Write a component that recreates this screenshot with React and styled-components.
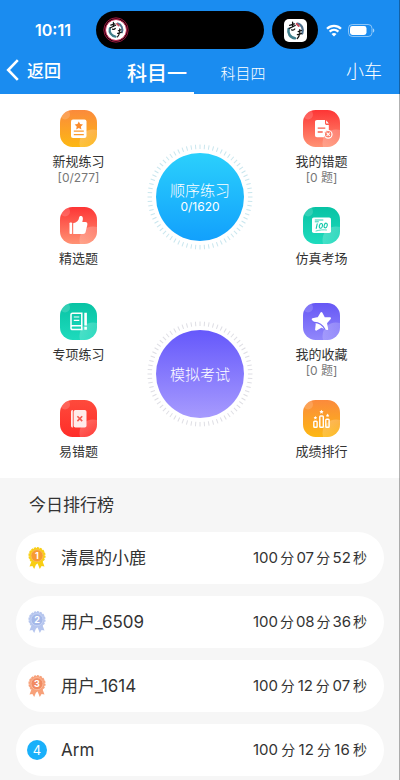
import styled, { createGlobalStyle } from "styled-components";

const GlobalStyle = createGlobalStyle`
  * {
    box-sizing: border-box;
  }

  body {
    margin: 0;
    background: #f6f6f6;
    color: #333;
    font-family: Inter, "Noto Sans CJK SC", sans-serif;
  }

  button {
    border: none;
    padding: 0;
    background: none;
    color: inherit;
    font-family: inherit;
    cursor: pointer;
  }
`;

const Page = styled.div`
  position: relative;
  min-height: 100vh;

  /* thin line along the right edge of the screen */
  &::after {
    content: "";
    position: absolute;
    top: 0;
    right: 0;
    bottom: 0;
    width: 1px;
    background: rgba(0, 0, 0, 0.3);
    pointer-events: none;
  }
`;

const Header = styled.header`
  background: #1a8cf0;
  color: white;
`;

const StatusBar = styled.div`
  display: flex;
  align-items: center;
  gap: 8px;
  padding-top: 11px;
`;

const Time = styled.time`
  flex: 1;
  padding-left: 35px;
  font-size: 16px;
  font-weight: 600;
  line-height: 20px;
`;

const Island = styled.div`
  display: flex;
  align-items: center;
  justify-content: ${(props) => (props.$small ? "center" : "flex-start")};
  width: ${(props) => (props.$small ? "46px" : "168px")};
  height: 38px;
  padding: ${(props) => (props.$small ? "0" : "0 7px")};
  border-radius: 19px;
  background: black;
`;

const Signals = styled.div`
  display: flex;
  align-items: center;
  gap: 6px;
  width: 74px;
`;

const Nav = styled.nav`
  display: grid;
  grid-template-columns: 1fr auto 1fr;
  height: 45px;
`;

const BackButton = styled.button`
  display: flex;
  align-items: center;
  justify-self: start;
  gap: 8px;
  padding: 0 0 4px 6px;
  font-size: 17px;
  font-weight: 500;
`;

const Tabs = styled.div`
  display: flex;
  gap: 12px;
`;

const Tab = styled.button`
  width: 74px;
  padding-top: 4px;
  border-bottom: 2px solid ${(props) => (props.$active ? "white" : "transparent")};
  font-size: ${(props) => (props.$active ? "20px" : "15px")};
  font-weight: ${(props) => (props.$active ? "500" : "300")};
`;

const VehicleButton = styled.button`
  justify-self: end;
  padding: 0 18px 4px 0;
  font-size: 18px;
  font-weight: 300;
`;

const Practice = styled.main`
  display: grid;
  grid-template-columns: 1fr 106px 1fr;
  height: 384px;
  padding: 16px 10px 0;
  background: white;
`;

const Column = styled.div`
  display: grid;
  grid-template-rows: 97px 96px 97px 78px;
  justify-items: center;
`;

const CenterColumn = styled.div`
  display: flex;
  flex-direction: column;
  gap: 71px;
  padding-top: 34px;
`;

const Feature = styled.button`
  display: flex;
  flex-direction: column;
  align-items: center;
`;

const Label = styled.span`
  margin-top: 5px;
  color: #333;
  font-size: 13px;
  line-height: 18px;
`;

const Count = styled.span`
  color: #777;
  font-size: 12px;
  line-height: 16px;
`;

const Ring = styled.button`
  display: grid;
  place-items: center;
  height: 106px;

  > * {
    grid-area: 1 / 1;
  }
`;

const Disc = styled.span`
  display: flex;
  flex-direction: column;
  align-items: center;
  justify-content: center;
  width: 88px;
  height: 88px;
  padding-top: 2px;
  border-radius: 50%;
  background: linear-gradient(${(props) => props.$from}, ${(props) => props.$to});
  color: white;
  font-size: 15px;
  font-weight: 300;
  line-height: 18px;
`;

const Progress = styled.span`
  font-size: 12px;
  font-weight: 400;
  line-height: 14px;
`;

const Ranking = styled.section`
  padding: 14px 16px 4px;
`;

const RankingTitle = styled.h2`
  margin: 0 0 14px 13px;
  font-size: 17px;
  font-weight: 400;
  line-height: 26px;
`;

const RankingList = styled.ol`
  display: flex;
  flex-direction: column;
  gap: 12px;
  margin: 0;
  padding: 0;
  list-style: none;
`;

const RankingRow = styled.li`
  display: flex;
  align-items: center;
  height: 52px;
  padding: 0 17px 0 11px;
  border-radius: 26px;
  background: white;
`;

const Place = styled.span`
  display: flex;
  justify-content: center;
  width: 20px;
`;

const PlaceNumber = styled.span`
  width: 20px;
  border-radius: 50%;
  background: #1ab0fa;
  color: white;
  font-size: 13px;
  line-height: 20px;
  text-align: center;
`;

const Name = styled.span`
  flex: 1;
  margin-left: 14px;
  font-size: 17px;
  line-height: 24px;
`;

const Score = styled.span`
  display: flex;
  align-items: baseline;
  justify-content: space-between;
  min-width: 114px;
  font-size: 14px;
  line-height: 20px;
`;

const Digits = styled.span`
  font-size: 15px;
`;

const tileColors = {
  orange: ["#fb8a3c", "#fdb813"],
  red: ["#fd3535", "#ff9274"],
  scarlet: ["#fe4a3c", "#ff2d28"],
  green: ["#08c3a4", "#1edbbd"],
  purple: ["#6657f5", "#9187fb"],
};

const Tile = ({ name, color, children }) => {
  const [from, to] = tileColors[color];
  return (
    <svg width="37" height="37" viewBox="0 0 37 37" aria-hidden="true">
      <defs>
        <linearGradient id={`tile-${name}`} x1="0" y1="0" x2="0" y2="1">
          <stop offset="0" stopColor={from} />
          <stop offset="1" stopColor={to} />
        </linearGradient>
        <linearGradient id={`shine-${name}`} x1="0" y1="0" x2="1" y2="1">
          <stop offset="0" stopColor="#fff" stopOpacity="0.28" />
          <stop offset="0.7" stopColor="#fff" stopOpacity="0.04" />
        </linearGradient>
        <clipPath id={`clip-${name}`}>
          <rect width="37" height="37" rx="12.5" />
        </clipPath>
      </defs>
      <g clipPath={`url(#clip-${name})`}>
        <rect width="37" height="37" fill={`url(#tile-${name})`} />
        <circle cx="5" cy="4.5" r="5" fill="#fff" opacity="0.16" />
        <circle cx="33" cy="33" r="13.5" fill={`url(#shine-${name})`} />
      </g>
      {children}
    </svg>
  );
};

const glyphs = {
  rules: (
    <>
      <rect x="11" y="9.5" width="15.5" height="18.5" rx="2" fill="#fff" />
      <path d="M18.8 11.4l1.3 2.6 2.9.4-2.1 2.1.5 2.9-2.6-1.4-2.6 1.4.5-2.9-2.1-2.1 2.9-.4z" fill="#fb8b2c" />
      <path d="M13.8 21.2h10M13.8 24.7h10" stroke="#fb9a2c" strokeWidth="1.2" />
    </>
  ),
  thumb: (
    <g fill="#fff">
      <rect x="9.5" y="15.5" width="2.6" height="11.5" rx="0.8" />
      <path d="M13.2 16.2c3.6-.6 5.5-2.6 5.8-5.2.2-1.9 1.4-2.3 2.5-1.9 1.6.6 1.8 2.7.8 6h3c1.7 0 2.4 1.2 2 2.8l-1.7 7.2c-.4 1.4-1.1 1.9-2.5 1.9h-9.9z" />
    </g>
  ),
  special: (
    <g fill="none" stroke="#fff">
      <path d="M12.6 10.2h9.2v12.6H11.6M11 24.4V11.6c0-.9.5-1.4 1.6-1.4M21.8 22.8v3.7h-9.2c-2.2 0-2.2-3.7 0-3.7" strokeWidth="1.5" />
      <path d="M13.8 14h5.5M13.8 17.4h5.5" strokeWidth="1.2" />
      <path d="M25.6 9.8v12.8M25.6 23.8v3" strokeWidth="2.6" />
    </g>
  ),
  mistakes: (
    <>
      <path d="M11 12c0-1.4.6-2 1.8-2v17.5c-1.2 0-1.8-.6-1.8-1.8z" fill="#fff" opacity="0.9" />
      <rect x="13.6" y="10" width="12.9" height="17.5" rx="1.8" fill="#ffeceb" />
      <path d="M17.4 16.3l4.8 4.8M22.2 16.3l-4.8 4.8" stroke="#f45b50" strokeWidth="1.6" />
    </>
  ),
  wrong: (
    <>
      <path d="M14 10h8v3.2c0 1.1.7 1.8 1.8 1.8h2v5c-3.4 0-5.4 2.5-4.7 7.2H14c-1.3 0-2-.8-2-2V12c0-1.3.7-2 2-2z" fill="#fff" />
      <path d="M23.1 10.2l2.7 3.3h-2.7z" fill="#fff" />
      <path d="M14.7 18.2h7.6M14.7 22h5" stroke="#f8604e" strokeWidth="1.3" />
      <circle cx="25.2" cy="24.3" r="3.8" fill="#fb7b66" stroke="#fff" strokeWidth="1.2" />
      <path d="M23.6 22.7l3.2 3.2M26.8 22.7l-3.2 3.2" stroke="#fff" strokeWidth="1.1" />
    </>
  ),
  exam: (
    <>
      <rect x="9" y="10.5" width="19" height="15.5" rx="1.8" fill="#fff" />
      <path d="M11.8 13h8.5M11.8 14.8h4" stroke="#15cbae" strokeWidth="0.9" />
      <g fill="none" stroke="#15c8ab" strokeWidth="1.1" strokeLinecap="round">
        <path d="M14.2 16.8l-1 4.6" />
        <ellipse cx="17.9" cy="18.9" rx="1.5" ry="2.4" transform="rotate(16 17.9 18.9)" />
        <ellipse cx="22.7" cy="18.5" rx="1.5" ry="2.4" transform="rotate(16 22.7 18.5)" />
        <path d="M13 24c4-1.2 7.8-1.4 10.5-1" strokeWidth="0.7" />
      </g>
    </>
  ),
  favorite: (
    <>
      <path
        d="M18.4 10l2.6 4.9 6 .4-4 4.6 1.2 6.2-5.9-2.5-5.2 3 .7-6.3-4.1-4.1 5.8-1.1z"
        fill="#fff"
        stroke="#fff"
        strokeWidth="2"
        strokeLinejoin="round"
      />
      <path d="M10 19.4c5.2-.4 9.6 2.2 12 7.2" fill="none" stroke="#7468f7" strokeWidth="1.1" />
    </>
  ),
  scores: (
    <>
      <g fill="none" stroke="#fff" strokeWidth="1.4">
        <rect x="10.8" y="21.3" width="3.3" height="6" rx="0.8" />
        <rect x="16.8" y="16" width="3.5" height="11.3" rx="0.8" />
        <rect x="22.8" y="19.3" width="3.3" height="8" rx="0.8" />
      </g>
      <g fill="#fff">
        <path d="M18.5 9.7l.7 1.3 1.4.2-1 1 .2 1.5-1.3-.7-1.3.7.2-1.5-1-1 1.4-.2z" />
        <path d="M12.4 16l.6 1.1 1.2.2-.9.8.2 1.3-1.1-.6-1.1.6.2-1.3-.9-.8 1.2-.2z" />
        <path d="M24.6 13.6l.6 1.1 1.2.2-.9.8.2 1.3-1.1-.6-1.1.6.2-1.3-.9-.8 1.2-.2z" />
      </g>
    </>
  ),
};

const leftFeatures = [
  { icon: "rules", color: "orange", title: "新规练习", count: "[0/277]" },
  { icon: "thumb", color: "red", title: "精选题" },
  { icon: "special", color: "green", title: "专项练习" },
  { icon: "mistakes", color: "scarlet", title: "易错题" },
];

const rightFeatures = [
  { icon: "wrong", color: "red", title: "我的错题", count: "[0 题]" },
  { icon: "exam", color: "green", title: "仿真考场" },
  { icon: "favorite", color: "purple", title: "我的收藏", count: "[0 题]" },
  { icon: "scores", color: "orange", title: "成绩排行" },
];

const ranking = [
  { name: "清晨的小鹿", minutes: "07", seconds: "52" },
  { name: "用户_6509", minutes: "08", seconds: "36" },
  { name: "用户_1614", minutes: "12", seconds: "07" },
  { name: "Arm", minutes: "12", seconds: "16" },
];

const FeatureColumn = ({ items }) => (
  <Column>
    {items.map((item) => (
      <Feature key={item.title}>
        <Tile name={item.icon} color={item.color}>
          {glyphs[item.icon]}
        </Tile>
        <Label>{item.title}</Label>
        {item.count && <Count>{item.count}</Count>}
      </Feature>
    ))}
  </Column>
);

const Ticks = ({ color }) => (
  <svg width="106" height="106" viewBox="0 0 106 106" aria-hidden="true">
    {Array.from({ length: 72 }, (_, i) => (
      <path key={i} d="M53 0.5v4.5" stroke={color} strokeWidth="1" transform={`rotate(${i * 5} 53 53)`} />
    ))}
  </svg>
);

// Brush swirl shared by both logos in the status bar
const Swirl = () => (
  <g fill="none" strokeLinecap="round">
    <path d="M4.6 10C3.6 14.4 6 18.7 11 19.3" stroke="#3f7f8c" strokeWidth="2.6" />
    <path d="M13.5 4.5c4.5 1 6.3 5.8 4.8 10" stroke="#51718d" strokeWidth="2.2" />
    <path d="M12.6 4.8l2.2 2.2" stroke="#c94759" strokeWidth="1.8" />
    <path d="M5.6 6.3l4.8-1.4M8.6 3.2v4.6M5.2 9.3l6-2.8M7.6 10.8c1.2.5 2.6.1 3.2-.8" stroke="#111" strokeWidth="1.3" />
    <path d="M14.2 12.6l3.2-1.1M15.8 10.6v3.6M13.4 15.6l4-1M15.5 15c-.2 2-1 3.4-2.2 4.6" stroke="#111" strokeWidth="1.3" />
  </g>
);

const RoundLogo = () => (
  <svg width="26" height="26" viewBox="0 0 26 26" aria-hidden="true">
    <circle cx="13" cy="13" r="12.2" fill="#160409" stroke="#96183f" strokeWidth="1" />
    <circle cx="13" cy="13" r="10.5" fill="#fff" stroke="#c82350" strokeWidth="1" />
    <g transform="translate(2.8 2.6) scale(0.88)">
      <Swirl />
    </g>
  </svg>
);

const SquareLogo = () => (
  <svg width="23" height="23" viewBox="0 0 23 23" aria-hidden="true">
    <rect width="23" height="23" rx="5" fill="#fff" />
    <Swirl />
  </svg>
);

const Wifi = () => (
  <svg width="16" height="13" viewBox="0 0 16 13" aria-hidden="true">
    <g fill="none" stroke="#fff" strokeWidth="2.3">
      <path d="M1 4.7c4-3.9 10-3.9 14 0" />
      <path d="M3.6 7.6c2.6-2.4 6.2-2.4 8.8 0" />
    </g>
    <path d="M8 12.6L5.5 10c1.4-1.3 3.6-1.3 5 0z" fill="#fff" />
  </svg>
);

const Battery = () => (
  <svg width="27" height="13" viewBox="0 0 27 13" aria-hidden="true">
    <rect x="0.5" y="0.5" width="23.5" height="12" rx="3.8" fill="none" stroke="#fff" opacity="0.5" />
    <rect x="2" y="2" width="16.5" height="9" rx="2.4" fill="#fff" />
    <path d="M25 4.5c1.7.5 1.7 3.5 0 4z" fill="#fff" opacity="0.6" />
  </svg>
);

const BackArrow = () => (
  <svg width="13" height="22" viewBox="0 0 13 22" aria-hidden="true">
    <path d="M11.8 1.2L2.2 11l9.6 9.8" fill="none" stroke="#fff" strokeWidth="2.6" />
  </svg>
);

const medalColors = [
  ["#f8ce13", "#f79a32", "#fbbd5b"],
  ["#b5c5ee", "#a5b8e8", "#cbd7f5"],
  ["#f7a17a", "#f18b62", "#fbc0a2"],
];

const Medal = ({ place }) => {
  const [edge, face, rim] = medalColors[place - 1];
  return (
    <svg width="18" height="22" viewBox="0 0 18 22" role="img">
      <path d="M4 13L1.5 19.6l2.9-.5L6.2 22l2.6-6.5zM14 13l2.5 6.6-2.9-.5-1.8 2.9-2.6-6.5z" fill={edge} />
      <circle cx="9" cy="8.7" r="7.7" fill={edge} />
      <circle cx="9" cy="8.7" r="7.7" fill="none" stroke={edge} strokeWidth="1.8" strokeDasharray="2.2 0.8" />
      <circle cx="9" cy="8.7" r="6" fill={face} stroke={rim} strokeWidth="0.8" />
      <text x="9" y="12" fill="#fff" fontSize="9" fontWeight="700" textAnchor="middle">
        {place}
      </text>
    </svg>
  );
};

const App = () => {
  return (
    <Page>
      <GlobalStyle />
      <Header>
        <StatusBar>
          <Time>10:11</Time>
          <Island>
            <RoundLogo />
          </Island>
          <Island $small>
            <SquareLogo />
          </Island>
          <Signals>
            <Wifi />
            <Battery />
          </Signals>
        </StatusBar>
        <Nav>
          <BackButton>
            <BackArrow />
            返回
          </BackButton>
          <Tabs>
            <Tab $active>科目一</Tab>
            <Tab>科目四</Tab>
          </Tabs>
          <VehicleButton>小车</VehicleButton>
        </Nav>
      </Header>

      <Practice>
        <FeatureColumn items={leftFeatures} />
        <CenterColumn>
          <Ring>
            <Ticks color="#c9e6ee" />
            <Disc $from="#2bd0fc" $to="#12a0fc">
              顺序练习
              <Progress>0/1620</Progress>
            </Disc>
          </Ring>
          <Ring>
            <Ticks color="#dedee4" />
            <Disc $from="#6558fb" $to="#a79bfe">
              模拟考试
            </Disc>
          </Ring>
        </CenterColumn>
        <FeatureColumn items={rightFeatures} />
      </Practice>

      <Ranking>
        <RankingTitle>今日排行榜</RankingTitle>
        <RankingList>
          {ranking.map((user, index) => (
            <RankingRow key={user.name}>
              <Place>
                {index < 3 ? <Medal place={index + 1} /> : <PlaceNumber>{index + 1}</PlaceNumber>}
              </Place>
              <Name>{user.name}</Name>
              <Score>
                <Digits>100</Digits>分<Digits>{user.minutes}</Digits>分<Digits>{user.seconds}</Digits>秒
              </Score>
            </RankingRow>
          ))}
        </RankingList>
      </Ranking>
    </Page>
  );
};

export default App;
